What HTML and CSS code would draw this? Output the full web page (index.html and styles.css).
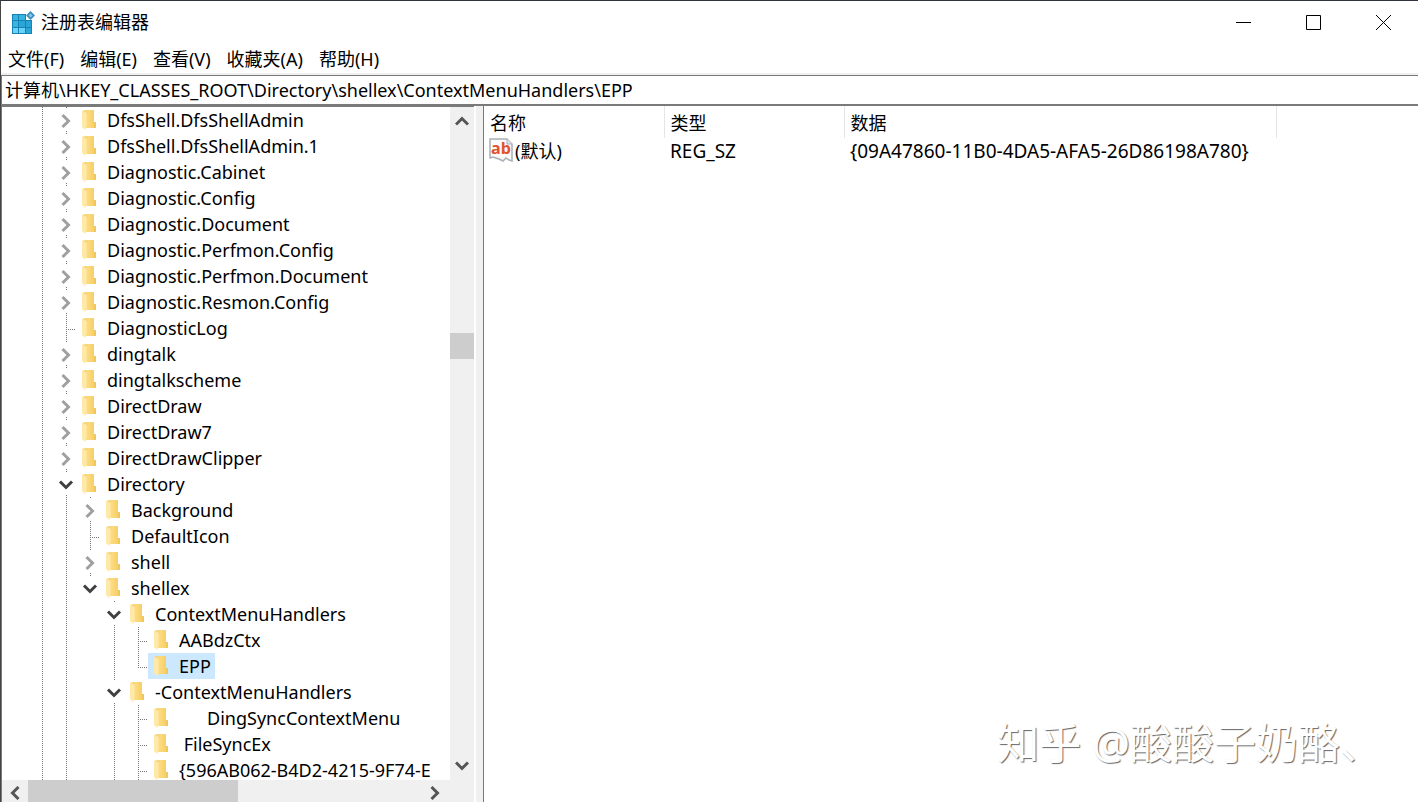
FILE: index.html
```html
<!DOCTYPE html>
<html lang="zh-CN">

<head>
    <meta charset="UTF-8">
    <meta name="viewport" content="width=device-width, initial-scale=1.0">
    <title>注册表编辑器</title>
    <link rel="stylesheet" href="styles.css">
</head>

<body>
    <!-- 公用图标 -->
    <svg class="defs" aria-hidden="true">
        <linearGradient id="fill" x1="0" y1="0" x2="1" y2="0">
            <stop offset="0" stop-color="#ffe08a" />
            <stop offset="1" stop-color="#f3cb5f" />
        </linearGradient>
        <symbol id="folder" viewBox="0 0 14 20">
            <path d="M3 0h9v12h2v6H3z" fill="url(#fill)" />
            <path d="M12 12l2 1v5h-2z" fill="#efc55c" />
            <path d="M0 1l4.500 1.500v14L3 20l-3-3z" fill="#ffe9a9" />
            <path d="M0 1L3 0h3l-1 3z" fill="#f6d67e" />
        </symbol>
        <symbol id="arrow" viewBox="0 0 14 14">
            <path d="M3.500 1L9.500 7l-6 6" fill="none" stroke="currentColor" stroke-width="3" />
        </symbol>
    </svg>

    <div class="window">
        <header class="titlebar">
            <svg class="logo" viewBox="0 0 24 24" aria-hidden="true">
                <path d="M1 3h14v6h6v14H1z" fill="#1583b5" />
                <path d="M2 4h5v5H2zM8 4h6v5H8zM2 10h5v6H2z" fill="#3bb4dd" />
                <path d="M8 10h6v6H8zM15 10h5v6h-5zM15 17h5v5h-5z" fill="#2aa5d8" />
                <path d="M2 17h5v5H2zM8 17h6v5H8z" fill="#6ad2f5" />
                <path d="M19.500 0l4.500 4.500-4.500 4.500L15 4.500z" fill="#3f8fc0" />
                <path d="M19.500 2.500l2 2-2 2-2-2z" fill="#8cc9e8" />
            </svg>
            <h1>注册表编辑器</h1>
            <div class="controls">
                <button type="button" aria-label="最小化"><svg viewBox="0 0 15 15"><path d="M0 7.500h15" /></svg></button>
                <button type="button" aria-label="最大化"><svg viewBox="0 0 15 15"><path d="M.5.5h14v14H.5z" /></svg></button>
                <button type="button" aria-label="关闭"><svg viewBox="0 0 15 15"><path d="M0 0l15 15M15 0L0 15" /></svg></button>
            </div>
        </header>
        <nav class="menu">
            <button type="button">文件(F)</button>
            <button type="button">编辑(E)</button>
            <button type="button">查看(V)</button>
            <button type="button">收藏夹(A)</button>
            <button type="button">帮助(H)</button>
        </nav>
        <input class="address" type="text" aria-label="地址"
            value="计算机\HKEY_CLASSES_ROOT\Directory\shellex\ContextMenuHandlers\EPP">

        <main class="panes">
            <section class="left">
                <div class="tree">
                    <ul>
                        <li>
                            <ul id="keys">
                                <li><button class="toggle" type="button" aria-label="展开"><svg><use href="#arrow" /></svg></button><span class="key"><svg><use href="#folder" /></svg>DfsShell.DfsShellAdmin</span></li>
                                <li><button class="toggle" type="button" aria-label="展开"><svg><use href="#arrow" /></svg></button><span class="key"><svg><use href="#folder" /></svg>DfsShell.DfsShellAdmin.1</span></li>
                                <li><button class="toggle" type="button" aria-label="展开"><svg><use href="#arrow" /></svg></button><span class="key"><svg><use href="#folder" /></svg>Diagnostic.Cabinet</span></li>
                                <li><button class="toggle" type="button" aria-label="展开"><svg><use href="#arrow" /></svg></button><span class="key"><svg><use href="#folder" /></svg>Diagnostic.Config</span></li>
                                <li><button class="toggle" type="button" aria-label="展开"><svg><use href="#arrow" /></svg></button><span class="key"><svg><use href="#folder" /></svg>Diagnostic.Document</span></li>
                                <li><button class="toggle" type="button" aria-label="展开"><svg><use href="#arrow" /></svg></button><span class="key"><svg><use href="#folder" /></svg>Diagnostic.Perfmon.Config</span></li>
                                <li><button class="toggle" type="button" aria-label="展开"><svg><use href="#arrow" /></svg></button><span class="key"><svg><use href="#folder" /></svg>Diagnostic.Perfmon.Document</span></li>
                                <li><button class="toggle" type="button" aria-label="展开"><svg><use href="#arrow" /></svg></button><span class="key"><svg><use href="#folder" /></svg>Diagnostic.Resmon.Config</span></li>
                                <li><i class="stub"></i><span class="key"><svg><use href="#folder" /></svg>DiagnosticLog</span></li>
                                <li><button class="toggle" type="button" aria-label="展开"><svg><use href="#arrow" /></svg></button><span class="key"><svg><use href="#folder" /></svg>dingtalk</span></li>
                                <li><button class="toggle" type="button" aria-label="展开"><svg><use href="#arrow" /></svg></button><span class="key"><svg><use href="#folder" /></svg>dingtalkscheme</span></li>
                                <li><button class="toggle" type="button" aria-label="展开"><svg><use href="#arrow" /></svg></button><span class="key"><svg><use href="#folder" /></svg>DirectDraw</span></li>
                                <li><button class="toggle" type="button" aria-label="展开"><svg><use href="#arrow" /></svg></button><span class="key"><svg><use href="#folder" /></svg>DirectDraw7</span></li>
                                <li><button class="toggle" type="button" aria-label="展开"><svg><use href="#arrow" /></svg></button><span class="key"><svg><use href="#folder" /></svg>DirectDrawClipper</span></li>
                                <li>
                                    <button class="toggle open" type="button" aria-label="折叠"><svg><use href="#arrow" /></svg></button><span class="key"><svg><use href="#folder" /></svg>Directory</span>
                                    <ul>
                                        <li><button class="toggle" type="button" aria-label="展开"><svg><use href="#arrow" /></svg></button><span class="key"><svg><use href="#folder" /></svg>Background</span></li>
                                        <li><i class="stub"></i><span class="key"><svg><use href="#folder" /></svg>DefaultIcon</span></li>
                                        <li><button class="toggle" type="button" aria-label="展开"><svg><use href="#arrow" /></svg></button><span class="key"><svg><use href="#folder" /></svg>shell</span></li>
                                        <li class="last">
                                            <button class="toggle open" type="button" aria-label="折叠"><svg><use href="#arrow" /></svg></button><span class="key"><svg><use href="#folder" /></svg>shellex</span>
                                            <ul>
                                                <li>
                                                    <button class="toggle open" type="button" aria-label="折叠"><svg><use href="#arrow" /></svg></button><span class="key"><svg><use href="#folder" /></svg>ContextMenuHandlers</span>
                                                    <ul>
                                                        <li><i class="stub"></i><span class="key"><svg><use href="#folder" /></svg>AABdzCtx</span></li>
                                                        <li class="last"><i class="stub"></i><span class="key selected"><svg><use href="#folder" /></svg>EPP</span></li>
                                                    </ul>
                                                </li>
                                                <li>
                                                    <button class="toggle open" type="button" aria-label="折叠"><svg><use href="#arrow" /></svg></button><span class="key"><svg><use href="#folder" /></svg>-ContextMenuHandlers</span>
                                                    <ul>
                                                        <li><i class="stub"></i><span class="key"><svg><use href="#folder" /></svg>      DingSyncContextMenu</span></li>
                                                        <li><i class="stub"></i><span class="key"><svg><use href="#folder" /></svg> FileSyncEx</span></li>
                                                        <li><i class="stub"></i><span class="key"><svg><use href="#folder" /></svg>{596AB062-B4D2-4215-9F74-E</span></li>
                                                    </ul>
                                                </li>
                                            </ul>
                                        </li>
                                    </ul>
                                </li>
                            </ul>
                        </li>
                    </ul>
                </div>
                <div class="vscroll">
                    <button class="up" type="button" aria-label="向上"><svg><use href="#arrow" /></svg></button>
                    <div class="track"><div class="thumb"></div></div>
                    <button class="down" type="button" aria-label="向下"><svg><use href="#arrow" /></svg></button>
                </div>
                <div class="hscroll">
                    <button class="prev" type="button" aria-label="向左"><svg><use href="#arrow" /></svg></button>
                    <div class="track"><div class="thumb"></div></div>
                    <button class="next" type="button" aria-label="向右"><svg><use href="#arrow" /></svg></button>
                </div>
            </section>

            <div class="splitter"></div>

            <section class="right">
                <table>
                    <thead>
                        <tr>
                            <th class="name">名称</th>
                            <th class="type">类型</th>
                            <th class="data">数据</th>
                        </tr>
                    </thead>
                    <tbody>
                        <tr>
                            <td>
                                <div class="value">
                                    <svg viewBox="0 0 24 24" aria-hidden="true">
                                        <path d="M1 1h17l5 5v17l-3-1-3-2-3 3-4-2-3-1-3-1-3 1z" fill="#fafafa" stroke="#a9b0b6" stroke-width="1.500" />
                                        <path d="M18 1v5h5" fill="#dfe3e6" stroke="#a9b0b6" />
                                        <text x="2" y="16">ab</text>
                                    </svg>(默认)
                                </div>
                            </td>
                            <td>REG_SZ</td>
                            <td>{09A47860-11B0-4DA5-AFA5-26D86198A780}</td>
                        </tr>
                    </tbody>
                </table>
                <p class="watermark">知乎 @酸酸子奶酪、</p>
            </section>
        </main>
    </div>
</body>

</html>
```
FILE: styles.css
```css
* {
    box-sizing: border-box;
}

body {
    margin: 0;
    font: 18px/26px "Noto Sans", "Noto Sans CJK SC", sans-serif;
    color: #000;
    background: #fff;
}

button {
    padding: 0;
    border: 0;
    background: none;
    font: inherit;
    color: inherit;
}

svg {
    display: block;
}

ul {
    margin: 0;
    padding: 0;
    list-style: none;
}

.defs {
    position: absolute;
    width: 0;
    height: 0;
}

/* 窗口 */
.window {
    display: flex;
    flex-direction: column;
    height: 100vh;
    overflow: hidden;
    border-top: 1px solid #2f3440;
    border-left: 1px solid #444;
}

.titlebar {
    display: flex;
    align-items: center;
    height: 43px;
    padding-left: 10px;
}

.titlebar h1 {
    margin: 0 auto 2px 6px;
    font-size: 18px;
    font-weight: normal;
}

.logo {
    width: 24px;
    height: 24px;
}

.controls {
    display: flex;
}

.controls button {
    display: flex;
    align-items: center;
    justify-content: center;
    width: 70px;
    height: 43px;
}

.controls svg {
    width: 15px;
    height: 15px;
    fill: none;
    stroke: #000;
}

.menu {
    display: flex;
    gap: 16px;
    height: 31px;
    padding: 1px 7px 0;
    border-bottom: 2px solid #f0f0f0;
}

.address {
    width: 100%;
    height: 31px;
    padding: 0 3px 2px;
    border: 1px solid #7a7a7a;
    border-width: 1px 0 2px 1px;
    font: inherit;
    color: inherit;
    outline: none;
}

.panes {
    display: flex;
    flex: 1;
    min-height: 0;
}

/* 左侧树 */
.left {
    display: grid;
    grid-template-columns: 1fr 24px;
    grid-template-rows: 1fr 22px;
    width: 473px;
    border: 1px solid #7a7a7a;
    border-width: 1px 0 0 1px;
    min-height: 0;
}

.tree {
    min-width: 0;
    min-height: 0;
    padding-left: 28px;
    overflow: hidden;
}

.tree > ul {
    width: 600px;
}

.tree ul ul {
    padding-left: 24px;
}

/* 竖向虚线 */
.tree li {
    background: repeating-linear-gradient(#777 0 1px, transparent 1px 2px) 12px 0 / 1px 100% no-repeat;
}

.tree .last {
    background-size: 1px 15px;
}

.toggle {
    float: left;
    width: 24px;
    height: 22px;
    margin: 2px 0;
    padding: 4px 5px;
    background: #fff;
    color: #a0a0a0;
}

.toggle svg {
    width: 14px;
    height: 16px;
}

.toggle.open {
    color: #404040;
}

.toggle.open svg {
    transform: rotate(90deg);
}

/* 没有子项时的横向虚线 */
.stub {
    float: left;
    width: 22px;
    height: 26px;
    background: repeating-linear-gradient(90deg, #777 0 1px, transparent 1px 2px) 12px 14px / 11px 1px no-repeat;
}

.key {
    display: flex;
    width: max-content;
    height: 26px;
    padding: 0 4px;
    white-space: pre;
}

.stub + .key {
    padding-left: 6px;
}

.key svg {
    width: 14px;
    height: 20px;
    margin: 3px 11px 0 0;
}

.key.selected {
    background: #cce8ff;
}

/* 滚动条 */
.vscroll,
.hscroll {
    display: flex;
    background: #f0f0f0;
    color: #555;
}

.vscroll {
    flex-direction: column;
}

.hscroll {
    grid-column: 1 / 3;
    padding-right: 26px;
}

.vscroll button,
.hscroll button {
    display: flex;
    align-items: center;
    justify-content: center;
    width: 26px;
    height: 26px;
}

.vscroll button {
    width: 24px;
    height: 28px;
}

.vscroll button svg,
.hscroll button svg {
    width: 14px;
    height: 14px;
}

.up svg {
    transform: rotate(-90deg);
}

.down svg {
    transform: rotate(90deg);
}

.prev svg {
    transform: rotate(180deg);
}

.track {
    flex: 1;
}

.thumb {
    background: #cdcdcd;
}

.vscroll .thumb {
    height: 26px;
    margin-top: 198px;
}

.hscroll .thumb {
    width: 210px;
    height: 26px;
}

.splitter {
    width: 9px;
    border-left: 2px solid #fff;
    background: #f0f0f0;
}

/* 右侧数值列表 */
.right {
    position: relative;
    flex: 1;
    min-width: 0;
    border-left: 1px solid #7a7a7a;
}

table {
    border-collapse: collapse;
    table-layout: fixed;
    width: 793px;
}

th {
    height: 32px;
    padding: 2px 6px 0;
    border-right: 1px solid #e5e5e5;
    font-weight: normal;
    text-align: left;
}

.name,
.type {
    width: 180px;
}

td {
    height: 26px;
    padding: 0 6px;
    font-size: 19px;
    white-space: nowrap;
}

.value {
    display: flex;
    gap: 2px;
    margin-left: -1px;
    font-size: 18px;
}

.value svg {
    width: 24px;
    height: 24px;
}

.value text {
    font: bold 16px "Open Sans", sans-serif;
    fill: #e0532f;
}

/* 水印 */
.watermark {
    position: absolute;
    right: 36px;
    bottom: 29px;
    margin: 0;
    font-size: 42px;
    line-height: 60px;
    color: #fff;
    text-shadow: 1px 1px 1px #666;
    white-space: nowrap;
}
```
